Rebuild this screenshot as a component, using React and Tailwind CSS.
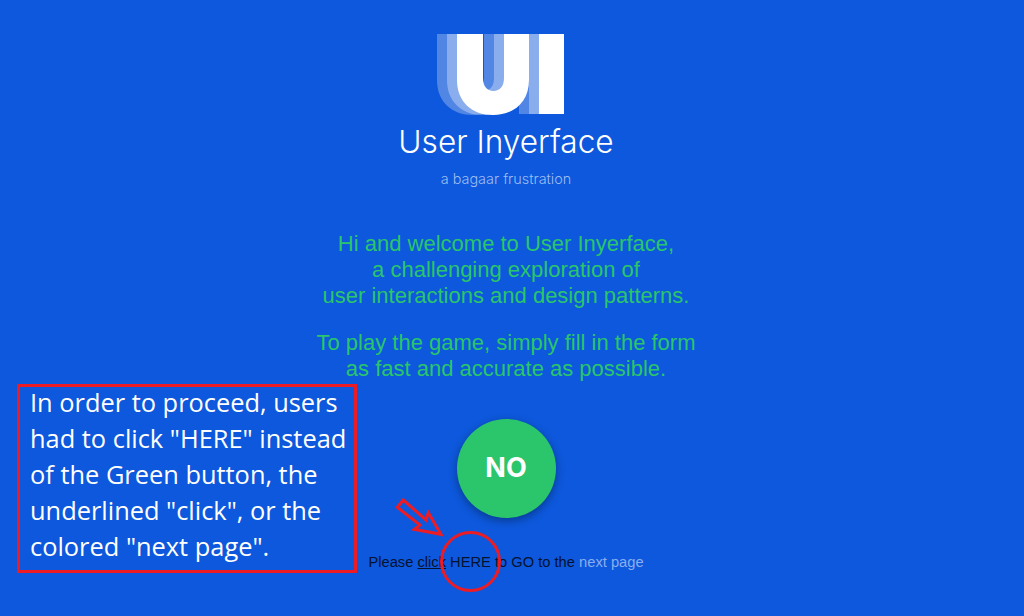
const uPath = "M457 34h26v44c0 8 4 13 10.500 13s10.500 -5 10.500 -13v-44h25v46c0 22 -15 35 -36 35s-36 -13 -36 -35z"

function Logo() {
  return (
    <svg width="128" height="82" viewBox="437 34 128 82" className="-ml-[10px] block">
      <g fill="#fff" opacity="0.28">
        <path d={uPath} transform="translate(-20 0)" />
        <rect x="519" y="34" width="25" height="80" />
      </g>
      <g fill="#fff" opacity="0.32">
        <path d={uPath} transform="translate(-10 0)" />
        <rect x="529" y="34" width="25" height="80" />
      </g>
      <path d={uPath} fill="#fff" />
      <rect x="539" y="34" width="25" height="80" fill="#fff" />
    </svg>
  )
}

export default function App() {
  return (
    <div className="relative h-[616px] w-[1024px] overflow-hidden bg-[#0d58dc] font-['Liberation_Sans',sans-serif]">
      <div className="flex w-[1012px] flex-col items-center pt-[34px]">
        <Logo />
        <h1 className="mt-[8px] font-['Inter',sans-serif] text-[31.6px] font-light leading-[36px] text-white">User Inyerface</h1>
        <p className="mt-[11px] font-['Inter',sans-serif] text-[14.4px] font-light leading-[16px] text-[#9dbcf3]">a bagaar frustration</p>
        <div className="mt-[44px] text-center text-[22px] leading-[26px] text-[#2bc56b]">
          <p>Hi and welcome to User Inyerface,<br />a challenging exploration of<br />user interactions and design patterns.</p>
          <p className="mt-[21px]">To play the game, simply fill in the form<br />as fast and accurate as possible.</p>
        </div>
        <button className="mt-[37px] h-[99px] w-[99px] rounded-full bg-[#2bc56b] font-['Inter',sans-serif] text-[27px] font-bold text-white shadow-[0_3px_8px_rgba(0,0,0,0.35)]">NO</button>
        <p className="mt-[35px] text-[14.7px] leading-[18px] text-[#061230]">
          Please <span className="underline">click</span> HERE to GO to the <span className="text-[#8aaef0]">next page</span>
        </p>
      </div>

      <div className="absolute left-[17px] top-[384px] h-[189px] w-[340px] border-[3px] border-[#ed1c24] pl-[10px] font-['Open_Sans',sans-serif] text-[25.4px] leading-[36px] text-white">
        <p className="-mt-[3px]">In order to proceed, users<br />had to click "HERE" instead<br />of the Green button, the<br />underlined "click", or the<br />colored "next page".</p>
      </div>

      <svg className="absolute left-[390px] top-[495px]" width="60" height="45" viewBox="0 0 60 45" fill="none" stroke="#ed1c24" strokeWidth="3">
        <path d="M13.300 5L36 25L38.300 17.700L51 39.300L24.300 34.300L30 30L7.300 12.300Z" />
      </svg>
      <div className="absolute left-[440px] top-[531px] h-[61px] w-[61px] rounded-full border-[3px] border-[#ed1c24]" />
    </div>
  )
}
